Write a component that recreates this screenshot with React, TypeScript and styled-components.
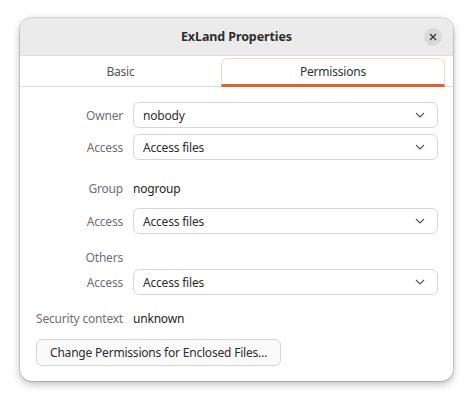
import React from 'react';
import styled, { createGlobalStyle } from 'styled-components';

const GlobalStyle = createGlobalStyle`
  html, body {
    margin: 0;
    padding: 0;
    background: #ffffff;
    font-family: "Noto Sans", "DejaVu Sans", sans-serif;
  }
`;

const Page = styled.div`
  padding: 18px 0 0 20px;
  width: 474px;
  height: 405px;
  box-sizing: border-box;
`;

const Window = styled.div`
  width: 433px;
  border-radius: 12px;
  background: #ffffff;
  overflow: hidden;
  box-shadow: 0 0 0 1px rgba(0, 0, 0, 0.14), 0 3px 9px rgba(0, 0, 0, 0.28);
`;

const HeaderBar = styled.div`
  height: 38px;
  background: #ebebeb;
  border-bottom: 1px solid #dcdcdc;
  box-sizing: border-box;
  display: flex;
  align-items: center;
  justify-content: center;
  position: relative;
`;

const Title = styled.div`
  font-size: 12.5px;
  font-weight: 700;
  letter-spacing: -0.1px;
  color: #2d2d2d;
`;

const CloseButton = styled.button`
  position: absolute;
  right: 11px;
  top: 10px;
  width: 18px;
  height: 18px;
  border-radius: 50%;
  border: none;
  padding: 0;
  background: #d9d9d9;
  display: flex;
  align-items: center;
  justify-content: center;
`;

const TabBar = styled.div`
  display: grid;
  grid-template-columns: 201px 1fr;
  padding: 2px 8px 0 0;
  height: 31px;
  box-sizing: border-box;
  border-bottom: 1px solid #dedede;
`;

const Tab = styled.div<{ $active?: boolean }>`
  display: flex;
  align-items: center;
  justify-content: center;
  font-size: 12px;
  letter-spacing: -0.2px;
  color: ${(p) => (p.$active ? '#333333' : '#555555')};
  border: 1px solid ${(p) => (p.$active ? 'rgba(233, 84, 32, 0.25)' : 'transparent')};
  border-bottom: 3px solid ${(p) => (p.$active ? '#e0632f' : 'transparent')};
  border-radius: 6px 6px 0 0;
  margin-bottom: -1px;
  padding-bottom: 1px;
`;

const Content = styled.div`
  display: grid;
  grid-template-columns: 87px 1fr;
  column-gap: 10px;
  padding: 0 15px 15px 16px;
  font-size: 12px;
  letter-spacing: -0.2px;
`;

const Label = styled.div<{ $top: number }>`
  margin-top: ${(p) => p.$top}px;
  color: #707070;
  display: flex;
  align-items: center;
  justify-content: flex-end;
  white-space: nowrap;
`;

const Value = styled.div<{ $top: number }>`
  margin-top: ${(p) => p.$top}px;
  color: #262626;
  height: 20px;
  display: flex;
  align-items: center;
`;

const Combo = styled.div<{ $top: number }>`
  margin-top: ${(p) => p.$top}px;
  height: 26px;
  box-sizing: border-box;
  border: 1px solid #d6d6d6;
  border-radius: 6px;
  background: #ffffff;
  display: flex;
  align-items: center;
  justify-content: space-between;
  padding: 0 12px 0 9px;
  color: #2d2d2d;
`;

const FullRow = styled.div<{ $top: number }>`
  grid-column: 1 / -1;
  margin-top: ${(p) => p.$top}px;
`;

const Button = styled.button`
  height: 27px;
  padding: 0 13px;
  border: 1px solid #d6d6d6;
  border-radius: 6px;
  background: #fafafa;
  font-family: inherit;
  font-size: 12px;
  letter-spacing: -0.2px;
  color: #2d2d2d;
`;

const Chevron = () => (
  <svg width="10" height="6" viewBox="0 0 10 6">
    <path d="M1 1l4 4 4-4" fill="none" stroke="#555" strokeWidth="1.1" />
  </svg>
);

function ComboRow({ top, label, value }: { top: number; label: string; value: string }) {
  return (
    <>
      <Label $top={top}>{label}</Label>
      <Combo $top={top}>
        <span>{value}</span>
        <Chevron />
      </Combo>
    </>
  );
}

function TextRow({ top, label, value }: { top: number; label: string; value?: string }) {
  return (
    <>
      <Label $top={top}>{label}</Label>
      <Value $top={top}>{value}</Value>
    </>
  );
}

export default function App() {
  return (
    <Page>
      <GlobalStyle />
      <Window>
        <HeaderBar>
          <Title>ExLand Properties</Title>
          <CloseButton aria-label="Close">
            <svg width="8" height="8" viewBox="0 0 8 8">
              <path d="M1 1l6 6M7 1L1 7" stroke="#333" strokeWidth="1.3" />
            </svg>
          </CloseButton>
        </HeaderBar>
        <TabBar>
          <Tab>Basic</Tab>
          <Tab $active>Permissions</Tab>
        </TabBar>
        <Content>
          <ComboRow top={15} label="Owner" value="nobody" />
          <ComboRow top={6} label="Access" value="Access files" />
          <TextRow top={18} label="Group" value="nogroup" />
          <ComboRow top={10} label="Access" value="Access files" />
          <TextRow top={13} label="Others" />
          <ComboRow top={2} label="Access" value="Access files" />
          <TextRow top={13} label="Security context" value="unknown" />
          <FullRow $top={11}>
            <Button>Change Permissions for Enclosed Files…</Button>
          </FullRow>
        </Content>
      </Window>
    </Page>
  );
}
